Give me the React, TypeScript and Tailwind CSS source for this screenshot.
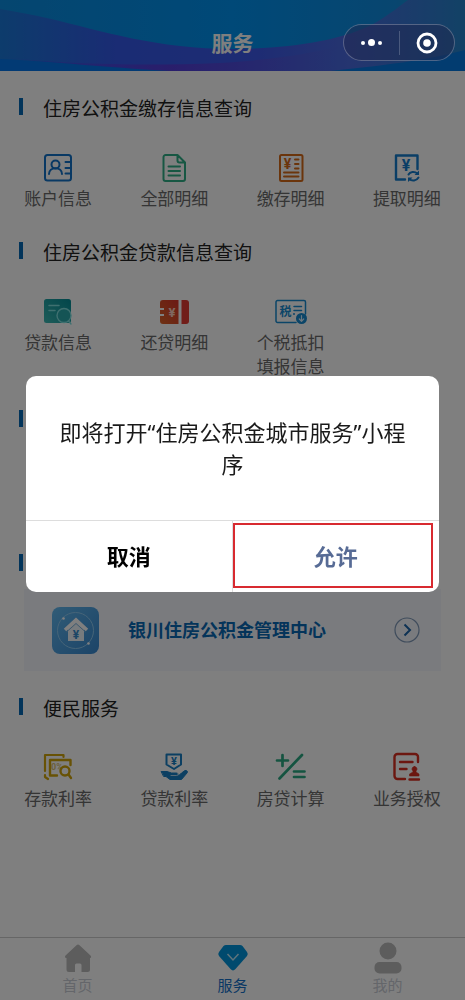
import type { ReactNode } from "react"

type Service = { label: ReactNode; icon: ReactNode }

function Icon({ color, children }: { color: string; children: ReactNode }) {
  return (
    <svg
      viewBox="0 0 32 32"
      className={`h-8 w-8 ${color}`}
      fill="none"
      stroke="currentColor"
      strokeWidth={2}
      strokeLinecap="round"
      strokeLinejoin="round"
      aria-hidden="true"
    >
      {children}
    </svg>
  )
}

function Yen({ x, y, size, fill = "currentColor" }: { x: number; y: number; size: number; fill?: string }) {
  return (
    <text x={x} y={y} fontSize={size} fontWeight="bold" fill={fill} stroke="none" textAnchor="middle" fontFamily="Roboto, sans-serif">
      ¥
    </text>
  )
}

const depositServices: Service[] = [
  {
    label: "账户信息",
    icon: (
      <Icon color="text-[#1272c8]">
        <rect x="3" y="3" width="26" height="25.5" rx="2.5" />
        <circle cx="13.5" cy="12.5" r="4" />
        <path d="M7 22c0-3.6 2.8-5.8 6.5-5.8S20 18.4 20 22M23.5 10H29M23.5 16H29M23.5 21.5H29" />
      </Icon>
    ),
  },
  {
    label: "全部明细",
    icon: (
      <Icon color="text-[#2fae86]">
        <path d="M19.5 3H7.5A2 2 0 0 0 5.5 5V27A2 2 0 0 0 7.5 29H25A2 2 0 0 0 27 27V10.500L19.5 3V8.5A2 2 0 0 0 21.5 10.5H27M10.5 14.5H22M10.5 19H22M10.5 23.5H22" />
      </Icon>
    ),
  },
  {
    label: "缴存明细",
    icon: (
      <Icon color="text-[#d66a18]">
        <rect x="5" y="3" width="22.5" height="26" rx="1.5" />
        <Yen x={12.5} y={17} size={14} />
        <path d="M20 7.500H23.5M20 12H23.5M20 16.5H23.5M9 20.5H23.5M9 24.5H23.5" />
      </Icon>
    ),
  },
  {
    label: "提取明细",
    icon: (
      <Icon color="text-[#147ccc]">
        <path d="M14 27.5H5V3.5H26.5V17" strokeWidth={2.4} />
        <Yen x={15} y={19} size={16} />
        <path d="M17.5 22.5C19 19.5 23.5 19 26.5 21.5M27.500 25.5C25.5 29 21 29.5 18 27" />
        <path d="M28 18.5V23H23.5ZM17 30V25.5H21.5Z" fill="currentColor" stroke="none" />
      </Icon>
    ),
  },
]

const loanServices: Service[] = [
  {
    label: "贷款信息",
    icon: (
      <Icon color="text-[#7fe0e0]">
        <defs>
          <linearGradient id="teal" x1="0" y1="1" x2="1" y2="0">
            <stop offset="0" stopColor="#3cb8b2" />
            <stop offset="1" stopColor="#048c96" />
          </linearGradient>
        </defs>
        <rect x="2" y="3" width="27" height="24" rx="2.5" fill="url(#teal)" stroke="none" />
        <path d="M7 9.5H17M7 14.5H13" strokeWidth={1.5} />
        <circle cx="22" cy="19.5" r="7" fill="#2aa8aa" strokeWidth={1.4} />
        <path d="M26.5 25L29 28" strokeWidth={1.4} />
      </Icon>
    ),
  },
  {
    label: "还贷明细",
    icon: (
      <Icon color="text-[#ffd0c0]">
        <defs>
          <linearGradient id="ticket" x1="0" y1="1" x2="1" y2="0">
            <stop offset="0" stopColor="#dc6428" />
            <stop offset="1" stopColor="#d93428" />
          </linearGradient>
        </defs>
        <path d="M5 4H20.5V28H5A3 3 0 0 1 2 25V20H6V18H2V14H6V12H2V7A3 3 0 0 1 5 4Z" fill="url(#ticket)" stroke="none" />
        <path d="M23.5 4H28A3 3 0 0 1 31 7V25A3 3 0 0 1 28 28H23.5Z" fill="#e23a32" stroke="none" />
        <Yen x={14} y={20.5} size={13} />
      </Icon>
    ),
  },
  {
    label: (
      <>
        个税抵扣
        <br />
        填报信息
      </>
    ),
    icon: (
      <Icon color="text-[#168ad0]">
        <path d="M21 26.5H2.5A1.5 1.5 0 0 1 1 25V6A1.5 1.5 0 0 1 2.5 4.5H29A1.5 1.5 0 0 1 30.5 6V18" strokeWidth={1.5} />
        <text x="10.5" y="20" fontSize="12" fontWeight="bold" fill="currentColor" stroke="none" textAnchor="middle" fontFamily="Noto Sans CJK SC, sans-serif">
          税
        </text>
        <path d="M19 10.5H26.5M19 14.5H26.5" strokeWidth={1.5} />
        <circle cx="19" cy="18" r="1" fill="currentColor" stroke="none" />
        <circle cx="26.5" cy="22.5" r="5.5" fill="currentColor" stroke="none" />
        <path d="M26.5 19.5V25M24.3 23L26.5 25.3L28.7 23" stroke="#d8efff" strokeWidth={1.2} />
      </Icon>
    ),
  },
]

const convenienceServices: Service[] = [
  {
    label: "存款利率",
    icon: (
      <Icon color="text-[#d0a40a]">
        <path d="M3 19V3H21.5V5M3 23V25L6 27" strokeWidth={2.2} />
        <path d="M15 23.5H8V8H28.5V13" strokeWidth={2.4} />
        <text x="15" y="18" fontSize="9" fontWeight="bold" fill="#d8c274" stroke="none" textAnchor="middle" fontFamily="Roboto, sans-serif">
          0%
        </text>
        <circle cx="23" cy="19" r="4.5" strokeWidth={2.4} />
        <path d="M26.5 22.5L29 26" strokeWidth={2.4} />
      </Icon>
    ),
  },
  {
    label: "贷款利率",
    icon: (
      <Icon color="text-[#187fc4]">
        <path d="M8.500 2.5H23V12.5L16 17L8.5 12.5Z" />
        <Yen x={16} y={13} size={11} />
        <path
          d="M3.5 19.5H9L13.5 21H18.5C20.5 21 20.5 23.5 18.5 23.5H14C18 24.5 21 24 23.5 21L27 18.5C29 18 30 19.5 29 21L23.5 27.5H12L8 24.5H6Z"
          fill="currentColor"
          strokeWidth={1}
        />
        <path d="M13 23.5H18.5C20 23.5 20.500 22.5 20 21.5" stroke="#d5e8f4" strokeWidth={0.8} />
      </Icon>
    ),
  },
  {
    label: "房贷计算",
    icon: (
      <Icon color="text-[#2ba982]">
        <path d="M2 8.5H13M7.5 3V14M27 3L4.5 26.5M19 19.5H29.5M19 25H29.5" strokeWidth={2.7} />
      </Icon>
    ),
  },
  {
    label: "业务授权",
    icon: (
      <Icon color="text-[#d82e20]">
        <path d="M27 10V5A3 3 0 0 0 24 2H6.5A3 3 0 0 0 3.5 5V24A3 3 0 0 0 6.5 27H14M9 10H21.5M9 17H15.5M18.5 27.5H28" strokeWidth={2.4} />
        <path d="M23.5 14.5A2.5 2.5 0 0 1 25 19V20L28 22V24H18.5V22L22 20V19A2.5 2.5 0 0 1 23.5 14.5Z" fill="currentColor" strokeWidth={0.6} />
      </Icon>
    ),
  },
]

function SectionBar({ title }: { title?: string }) {
  return (
    <div className="flex h-7 gap-5 pl-[19px]">
      <span className="mt-[3px] h-[17px] w-1 bg-[#0568b4]"></span>
      {title && <h2 className="text-[19px] leading-7 text-[#222222]">{title}</h2>}
    </div>
  )
}

function ServiceSection({ title, services }: { title: string; services: Service[] }) {
  return (
    <section className="pb-7">
      <SectionBar title={title} />
      <div className="mt-[29px] grid grid-cols-4">
        {services.map((service, i) => (
          <a key={i} href="#" className="flex flex-col items-center gap-[3px] text-center text-[17px] leading-6 text-[#6a6a6a]">
            {service.icon}
            <span>{service.label}</span>
          </a>
        ))}
      </div>
    </section>
  )
}

function Header() {
  return (
    <header className="relative h-[71px] overflow-hidden bg-[#0090f0]">
      <svg viewBox="0 0 465 71" preserveAspectRatio="none" className="absolute inset-0 h-full w-full" aria-hidden="true">
        <defs>
          <linearGradient id="base" x1="0" y1="0" x2="1" y2="0">
            <stop offset="0" stopColor="#0a8ce0" />
            <stop offset="0.5" stopColor="#0092f0" />
            <stop offset="0.85" stopColor="#108ce0" />
            <stop offset="1" stopColor="#2a9cb8" />
          </linearGradient>
          <linearGradient id="wave" x1="0" y1="0" x2="1" y2="0">
            <stop offset="0" stopColor="#1a78d8" />
            <stop offset="0.25" stopColor="#3458e8" />
            <stop offset="0.55" stopColor="#3c58e8" />
            <stop offset="0.75" stopColor="#4a6ae0" />
            <stop offset="1" stopColor="#2484cc" />
          </linearGradient>
          <linearGradient id="edge" x1="0" y1="0" x2="1" y2="0">
            <stop offset="0" stopColor="#3458e8" />
            <stop offset="0.5" stopColor="#6030d0" />
            <stop offset="1" stopColor="#4868e0" />
          </linearGradient>
        </defs>
        <rect width="465" height="71" fill="url(#base)" />
        <path d="M0 9C70 20 110 38 180 46C240 53 330 48 375 23C390 14 400 6 408 0H465V71H0Z" fill="url(#wave)" />
        <path d="M0 57C70 65 150 66 220 63C270 60 310 54 340 46C325 58 330 66 340 71H120C80 66 40 61 0 57Z" fill="url(#edge)" opacity="0.7" />
        <path d="M0 59C60 62 100 67 170 71H0Z" fill="#0474e8" />
        <path d="M330 71C380 66 430 60 465 50V71Z" fill="#0478e0" />
      </svg>
      <h1 className="relative pt-7 text-center text-[21px] leading-[30px] font-bold text-white">服务</h1>
    </header>
  )
}

function Capsule() {
  return (
    <div className="absolute top-6 right-[10px] z-20 flex h-[37px] w-28 items-center rounded-full border border-white/25 bg-[#202850]/50">
      <button type="button" aria-label="更多" className="flex h-full flex-1 items-center justify-center gap-[3px]">
        <span className="h-1 w-1 rounded-full bg-white"></span>
        <span className="h-[7px] w-[7px] rounded-full bg-white"></span>
        <span className="h-1 w-1 rounded-full bg-white"></span>
      </button>
      <span className="h-6 w-px bg-white/20"></span>
      <button type="button" aria-label="关闭" className="flex h-full flex-1 items-center justify-center">
        <svg viewBox="0 0 22 22" className="h-[22px] w-[22px]" aria-hidden="true">
          <circle cx="11" cy="11" r="9" fill="none" stroke="white" strokeWidth="2.8" />
          <circle cx="11" cy="11" r="3.8" fill="white" />
        </svg>
      </button>
    </div>
  )
}

function CenterCard() {
  return (
    <section className="pb-6">
      <SectionBar />
      <a href="#" className="mx-6 mt-[10px] flex h-[82px] items-center bg-[#f4f7fd] pr-[21px] pl-7">
        <svg viewBox="0 0 47 47" className="h-[47px] w-[47px]" aria-hidden="true">
          <defs>
            <linearGradient id="logo" x1="0" y1="0" x2="1" y2="1">
              <stop offset="0" stopColor="#62b8ee" />
              <stop offset="1" stopColor="#3888d0" />
            </linearGradient>
          </defs>
          <rect width="47" height="47" rx="8" fill="url(#logo)" />
          <circle cx="23.5" cy="23.5" r="18" fill="none" stroke="#8cc8f0" strokeWidth="1" />
          <circle cx="11.5" cy="11.5" r="1.3" fill="white" />
          <circle cx="36.5" cy="36.5" r="1.3" fill="white" />
          <path d="M16 21L24 14L32 21V34H16Z" fill="#eef6fc" />
          <path d="M13 23L24 13L35 23" fill="none" stroke="white" strokeWidth="3.6" />
          <path d="M14.5 25L24 16.500L33.5 25" fill="none" stroke="#7fb4dc" strokeWidth="1" />
          <Yen x={24} y={32} size={12} fill="#368ccc" />
        </svg>
        <span className="ml-[29px] flex-1 text-lg font-bold text-[#0868b4]">银川住房公积金管理中心</span>
        <svg viewBox="0 0 26 26" className="h-[26px] w-[26px]" fill="none" aria-hidden="true">
          <circle cx="13" cy="13" r="12" stroke="#8099b8" strokeWidth="1.2" />
          <path d="M10.5 7.5L16 13L10.5 18.5" stroke="#1c64a8" strokeWidth="2" />
        </svg>
      </a>
    </section>
  )
}

function TabBar() {
  return (
    <nav className="grid h-[63px] grid-cols-3 border-t border-[#cccccc] text-[15px] leading-5 text-[#c8ccd4]">
      <a href="#" className="flex flex-col items-center gap-px pt-1">
        <svg viewBox="0 0 32 32" className="h-8 w-8 text-[#bababa]" fill="currentColor" aria-hidden="true">
          <path d="M14.500 3.2Q16 2 17.5 3.2L28.5 13.5Q30 15.5 28 16V27.5Q28 30 25.5 30H19.5V23Q19.5 21.5 18 21.5H14.5Q13 21.5 13 23V30H7Q4.5 30 4.5 27.5V16Q2 15.5 3.5 13.5Z" />
        </svg>
        <span>首页</span>
      </a>
      <a href="#" aria-current="page" className="flex flex-col items-center gap-px pt-1 text-[#1470c8]">
        <svg viewBox="0 0 32 32" className="h-8 w-8" aria-hidden="true">
          <path d="M9 3H23Q24.5 3 25.5 4L30 10Q31.5 12 30 14L18.5 27Q16 29.8 13.5 27L2 14Q0.5 12 2 10L6.5 4Q7.5 3 9 3Z" fill="#0094dc" />
          <path d="M10.5 12L16 18L21.5 12" fill="none" stroke="#bde8f8" strokeWidth="1.5" />
        </svg>
        <span>服务</span>
      </a>
      <a href="#" className="flex flex-col items-center gap-px pt-1">
        <svg viewBox="0 0 32 32" className="h-8 w-8 text-[#bababa]" fill="currentColor" aria-hidden="true">
          <circle cx="16" cy="9" r="8.5" />
          <rect x="2.5" y="20" width="27" height="11.5" rx="5" />
        </svg>
        <span>我的</span>
      </a>
    </nav>
  )
}

function ConfirmDialog() {
  return (
    <div className="fixed inset-0 z-10 flex items-center justify-center bg-black/50 px-[26px] pb-8">
      <div role="dialog" aria-modal="true" aria-labelledby="dialog-title" className="w-full overflow-hidden rounded-[10px] bg-white text-[22px]">
        <p id="dialog-title" className="px-7 py-10 text-center leading-8 text-[#1a1a1a]">
          即将打开“住房公积金城市服务”小程序
        </p>
        <div className="grid grid-cols-2 border-t border-[#dddddd] font-bold">
          <button type="button" className="h-[71px] border-r border-[#dddddd] text-black">
            取消
          </button>
          <button type="button" className="relative h-[71px] text-[#576b95]">
            允许
            <span className="absolute top-0.5 right-1.5 bottom-1 left-0 border-2 border-[#d82a30]"></span>
          </button>
        </div>
      </div>
    </div>
  )
}

export default function App() {
  return (
    <div lang="zh-CN" className="relative flex min-h-screen flex-col bg-white font-['Noto_Sans','Noto_Sans_CJK_SC',sans-serif]">
      <Header />
      <Capsule />
      <main className="flex-1 pt-6">
        <ServiceSection title="住房公积金缴存信息查询" services={depositServices} />
        <ServiceSection title="住房公积金贷款信息查询" services={loanServices} />
        <section className="min-h-36">
          <SectionBar />
        </section>
        <CenterCard />
        <ServiceSection title="便民服务" services={convenienceServices} />
      </main>
      <TabBar />
      <ConfirmDialog />
    </div>
  )
}
